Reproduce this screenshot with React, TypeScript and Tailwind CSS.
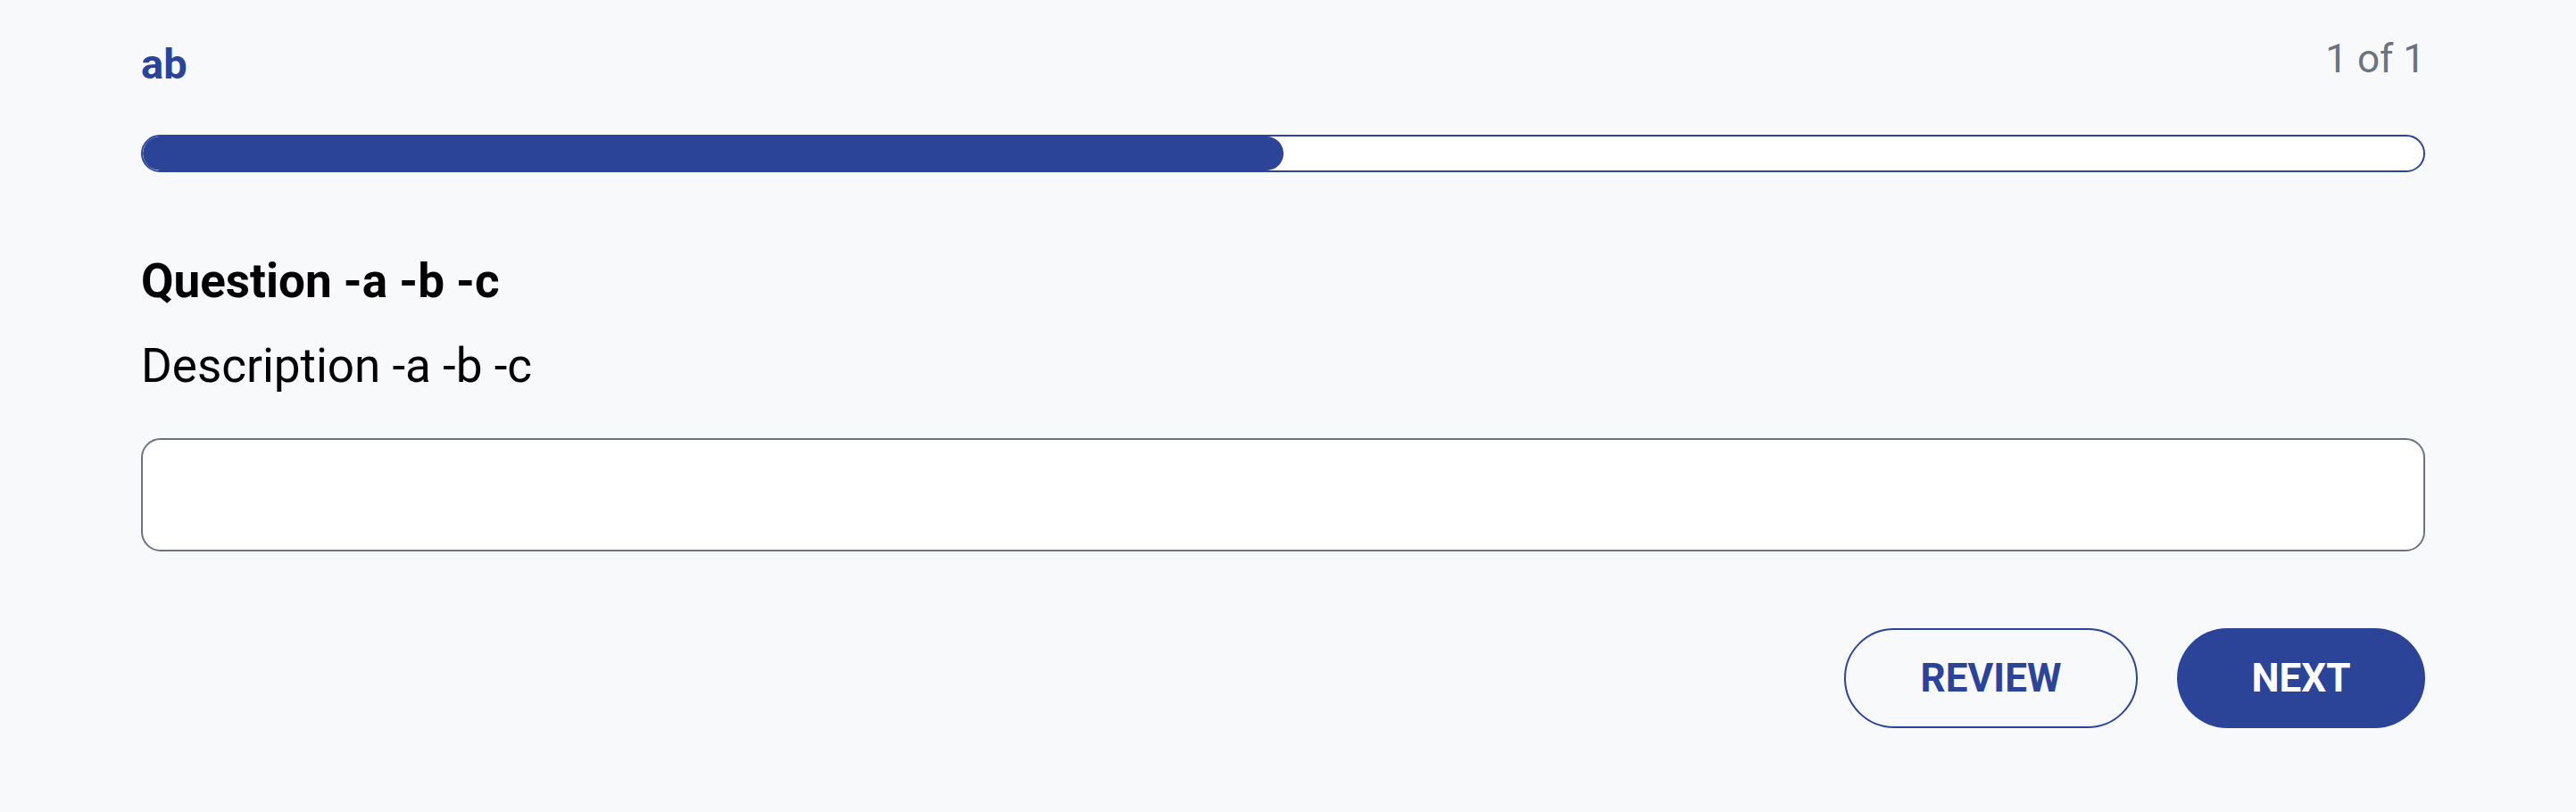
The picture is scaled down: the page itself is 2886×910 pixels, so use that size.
import { useState } from "react";

const NAVY = "#2c4497";

export default function App() {
  const [answer, setAnswer] = useState("");
  const progress = 50;

  return (
    <div className="min-h-screen bg-[#f8f9fb] pl-[158px] pr-[169px] pt-[38px] font-['Roboto',sans-serif]">
      <div className="flex items-start justify-between">
        <span className="mt-[7px] text-[47px] font-bold leading-[54px] text-[#2c4497]">
          ab
        </span>
        <span className="mt-[2px] text-[44px] leading-[52px] text-[#6b7280]">1 of 1</span>
      </div>

      <div className="mt-[52px] h-[42px] overflow-hidden rounded-full border-2 border-[#2c4497] bg-white">
        <div
          className="h-full rounded-full bg-[#2c4497]"
          style={{ width: `${progress}%` }}
        />
      </div>

      <h2 className="mt-[91px] text-[53px] font-bold leading-[62px] text-black">
        Question -a -b -c
      </h2>
      <p className="mt-[33px] text-[53px] leading-[62px] text-black">
        Description -a -b -c
      </p>

      <input
        type="text"
        value={answer}
        onChange={(e) => setAnswer(e.target.value)}
        aria-label="Answer"
        className="mt-[50px] block h-[127px] w-full rounded-[22px] border-2 border-[#6b7280] bg-white px-8 text-[46px] outline-none"
      />

      <div className="mt-[86px] flex justify-end gap-[44px]">
        <button
          type="button"
          className="flex h-[112px] w-[329px] items-center justify-center rounded-full border-2 border-[#2c4497] text-[44px] font-bold text-[#2c4497]"
        >
          REVIEW
        </button>
        <button
          type="button"
          style={{ backgroundColor: NAVY }}
          className="flex h-[112px] w-[278px] items-center justify-center rounded-full text-[44px] font-bold text-white"
        >
          NEXT
        </button>
      </div>
    </div>
  );
}
